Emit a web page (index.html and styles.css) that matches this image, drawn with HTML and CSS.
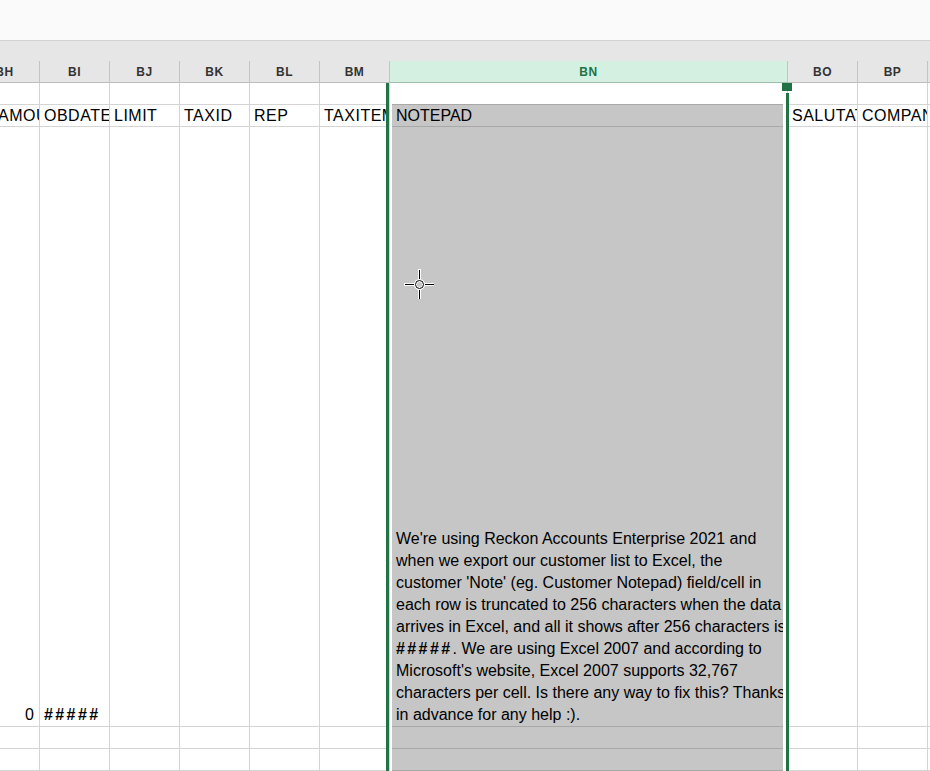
FILE: index.html
```html
<!DOCTYPE html>
<html lang="en">
<head>
	<meta charset="UTF-8">
	<title>Customer export - NOTEPAD column</title>
	<link rel="stylesheet" href="styles.css">
</head>
<body>
<div class="top"></div>
<div class="band"></div>
<div class="sheet">
	<!-- column letters -->
	<div class="head">BH</div>
	<div class="head">BI</div>
	<div class="head">BJ</div>
	<div class="head">BK</div>
	<div class="head">BL</div>
	<div class="head">BM</div>
	<div class="head head-active">BN</div>
	<div class="head">BO</div>
	<div class="head">BP</div>
	<div class="head"></div>

	<!-- row 1 -->
	<div class="cell"></div>
	<div class="cell"></div>
	<div class="cell"></div>
	<div class="cell"></div>
	<div class="cell"></div>
	<div class="cell"></div>
	<div class="cell sel"><div class="fill fill-active"></div></div>
	<div class="cell"></div>
	<div class="cell"></div>
	<div class="cell"></div>

	<!-- row 2: field names -->
	<div class="cell label">OBAMOUNT</div>
	<div class="cell label">OBDATE</div>
	<div class="cell label">LIMIT</div>
	<div class="cell label">TAXID</div>
	<div class="cell label">REP</div>
	<div class="cell label">TAXITEM</div>
	<div class="cell sel"><div class="fill">NOTEPAD</div></div>
	<div class="cell label">SALUTATION</div>
	<div class="cell label">COMPANYNAME</div>
	<div class="cell"></div>

	<!-- row 3: the record -->
	<div class="cell tall num"><span>0</span></div>
	<div class="cell tall"><span class="hash">#####</span></div>
	<div class="cell tall"></div>
	<div class="cell tall"></div>
	<div class="cell tall"></div>
	<div class="cell tall"></div>
	<div class="cell sel">
		<div class="fill note">
			<p>We're using Reckon Accounts Enterprise 2021 and<br>
			when we export our customer list to Excel, the<br>
			customer 'Note' (eg. Customer Notepad) field/cell in<br>
			each row is truncated to 256 characters when the data<br>
			arrives in Excel, and all it shows after 256 characters is<br>
			<span class="hash">#####</span>. We are using Excel 2007 and according to<br>
			Microsoft's website, Excel 2007 supports 32,767<br>
			characters per cell. Is there any way to fix this? Thanks<br>
			in advance for any help :).</p>
		</div>
	</div>
	<div class="cell tall"></div>
	<div class="cell tall"></div>
	<div class="cell tall"></div>

	<!-- rows 4, 5 -->
	<div class="cell"></div>
	<div class="cell"></div>
	<div class="cell"></div>
	<div class="cell"></div>
	<div class="cell"></div>
	<div class="cell"></div>
	<div class="cell sel"><div class="fill"></div></div>
	<div class="cell"></div>
	<div class="cell"></div>
	<div class="cell"></div>

	<div class="cell"></div>
	<div class="cell"></div>
	<div class="cell"></div>
	<div class="cell"></div>
	<div class="cell"></div>
	<div class="cell"></div>
	<div class="cell sel"><div class="fill"></div></div>
	<div class="cell"></div>
	<div class="cell"></div>
	<div class="cell"></div>

	<div class="sel-box"></div>

	<svg class="cursor" width="30" height="30" viewBox="0 0 30 30">
		<g stroke="#ffffff" stroke-width="3" fill="none">
			<path d="M0 15.5h10M21 15.5h10M15.5 0v10M15.5 21v10"/>
			<circle cx="15.5" cy="15.5" r="4"/>
		</g>
		<g stroke="#000000" stroke-width="1" fill="none">
			<path d="M1 15.5h9M21 15.5h9M15.5 1v9M15.5 21v9"/>
			<circle cx="15.5" cy="15.5" r="4"/>
		</g>
	</svg>
</div>
</body>
</html>
```

FILE: styles.css
```css
* {
	margin: 0;
	padding: 0;
	box-sizing: border-box;
}

body {
	width: 930px;
	height: 771px;
	overflow: hidden;
	background: #ffffff;
	font-family: "Liberation Sans", Arial, sans-serif;
	color: #000000;
}

.top {
	height: 41px;
	background: #fafafa;
	border-bottom: 1px solid #d2d2d2;
}

.band {
	height: 20px;
	background: #e6e6e6;
}

.sheet {
	position: relative;
	margin-left: -30px;
	width: 960px;
	display: grid;
	grid-template-columns: repeat(6, 70px) 398px 70px 70px 1fr;
	grid-template-rows: 22px 22px 22px 600px 22px 22px;
}

.head {
	background: #e6e6e6;
	border-right: 1px solid #c4c4c4;
	border-bottom: 1px solid #bcbcbc;
	padding-top: 2px;
	font-size: 12px;
	font-weight: bold;
	line-height: 19px;
	letter-spacing: 0.5px;
	text-align: center;
	color: #333333;
}

.head-active {
	background: #d3f0e0;
	color: #217346;
	border-bottom-color: #9dbfaa;
}

.cell {
	border-right: 1px solid #d4d4d4;
	border-bottom: 1px solid #d4d4d4;
	padding: 0 4px;
	font-size: 16px;
	line-height: 21px;
	white-space: nowrap;
	overflow: hidden;
}

.label {
	letter-spacing: 0.5px;
}

.tall {
	display: flex;
	flex-direction: column;
	justify-content: flex-end;
	line-height: 22px;
}

.num {
	align-items: flex-end;
	padding-right: 5px;
}

.hash {
	font-weight: bold;
	letter-spacing: 2.4px;
}

/* column BN, shaded as part of the selection */
.cell.sel {
	border-bottom: none;
	padding: 0 4px 0 2px;
	background: #ffffff;
}

.fill {
	height: 100%;
	background: #c6c6c6;
	border-bottom: 1px solid #a8a8a8;
	padding-left: 4px;
	overflow: hidden;
}

.fill-active {
	background: #ffffff;
}

.note {
	display: flex;
	flex-direction: column;
	justify-content: flex-end;
	line-height: 22px;
}

.sel-box {
	position: absolute;
	left: 416px;
	top: 22px;
	bottom: 0;
	width: 403px;
	border-left: 3px solid #217346;
	pointer-events: none;
}

.sel-box::after {
	content: "";
	position: absolute;
	right: 0;
	top: 10px;
	bottom: 0;
	width: 3px;
	background: #217346;
}

.sel-box::before {
	content: "";
	position: absolute;
	left: 393px;
	top: 0;
	width: 10px;
	height: 8px;
	background: #217346;
}

.cursor {
	position: absolute;
	left: 434px;
	top: 208px;
}
```
